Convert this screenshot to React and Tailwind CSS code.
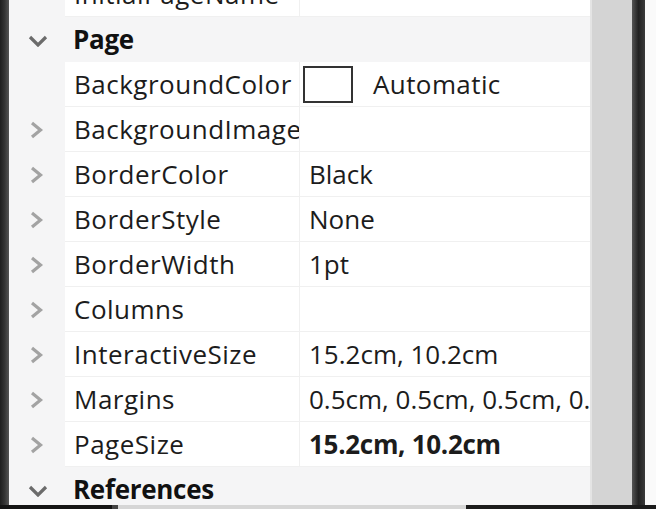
import React from 'react';

const rows = [
  { type: 'prop', name: 'InitialPageName', value: '', top: true },
  { type: 'cat', name: 'Page' },
  { type: 'prop', name: 'BackgroundColor', value: 'Automatic', swatch: true, noArrow: true },
  { type: 'prop', name: 'BackgroundImage', value: '' },
  { type: 'prop', name: 'BorderColor', value: 'Black' },
  { type: 'prop', name: 'BorderStyle', value: 'None' },
  { type: 'prop', name: 'BorderWidth', value: '1pt' },
  { type: 'prop', name: 'Columns', value: '' },
  { type: 'prop', name: 'InteractiveSize', value: '15.2cm, 10.2cm' },
  { type: 'prop', name: 'Margins', value: '0.5cm, 0.5cm, 0.5cm, 0.5cm' },
  { type: 'prop', name: 'PageSize', value: '15.2cm, 10.2cm', bold: true },
  { type: 'cat', name: 'References' },
];

function ChevronRight() {
  return (
    <svg width="15" height="18" viewBox="0 0 15 18" fill="none">
      <polyline points="3,2 11.5,9 3,16" stroke="#a3a3a3" strokeWidth="3.2" strokeLinejoin="miter" />
    </svg>
  );
}

function ChevronDown() {
  return (
    <svg width="20" height="12" viewBox="0 0 20 12" fill="none">
      <polyline points="2,2 10,10 18,2" stroke="#6b6b6b" strokeWidth="3.2" />
    </svg>
  );
}

function Row({ row }) {
  if (row.type === 'cat') {
    return (
      <div className="flex h-[45px] shrink-0 items-center bg-[#f5f5f6]">
        <div className="flex w-[56px] shrink-0 justify-center pl-[2px] pt-[2px]">
          <ChevronDown />
        </div>
        <span className="pl-[8px] text-[26px] font-bold tracking-[-0.3px] text-[#111]">{row.name}</span>
      </div>
    );
  }
  return (
    <div className={`flex h-[45px] shrink-0 ${row.top ? '-mt-[28px]' : ''}`}>
      <div className="flex w-[56px] shrink-0 items-center justify-center bg-[#f5f5f6] pr-[1px]">
        {!row.noArrow && !row.top && <ChevronRight />}
      </div>
      <div className="flex w-[235px] shrink-0 items-center overflow-hidden whitespace-nowrap border-b border-r border-[#f0f0f0] bg-white pl-[9px]">
        <span className="text-[26px] tracking-[0.5px] text-[#1c1c1c]">{row.name}</span>
      </div>
      <div className="flex w-[290px] shrink-0 items-center overflow-hidden whitespace-nowrap border-b border-[#f0f0f0] bg-white">
        {row.swatch ? (
          <>
            <span className="ml-[3px] h-[37px] w-[50px] shrink-0 border-2 border-[#333] bg-white" />
            <span className="ml-[20px] text-[26px] tracking-[0.4px] text-[#1c1c1c]">{row.value}</span>
          </>
        ) : (
          <span className={`pl-[9px] text-[26px] text-[#1c1c1c] ${row.bold ? 'font-bold tracking-[-0.3px]' : ''}`}>
            {row.value}
          </span>
        )}
      </div>
    </div>
  );
}

export default function App() {
  return (
    <div className="h-[509px] w-[656px] overflow-hidden bg-white" style={{ fontFamily: '"Open Sans", "Noto Sans", sans-serif' }}>
      <div className="flex h-[505px] overflow-hidden">
        <div className="w-[9px] shrink-0 bg-gradient-to-r from-[#1e1e1e] via-[#333] to-[#555]" />
        <div className="flex w-[581px] shrink-0 flex-col overflow-hidden bg-[#f5f5f6]">
          {rows.map((r) => (
            <Row key={r.name} row={r} />
          ))}
        </div>
        <div className="w-[42px] shrink-0 border-l-2 border-[#e4e4e4] bg-[#d4d4d4]" />
        <div className="w-[13px] shrink-0 bg-gradient-to-r from-[#555] via-[#222] to-[#3a3a3a]" />
        <div className="flex-1 bg-[#fafafa]" />
      </div>
      <div className="flex h-[4px]">
        <div className="w-[112px] bg-[#141414]" />
        <div className="w-[6px] bg-[#444]" />
        <div className="w-[348px] bg-[#d6d6d6]" />
        <div className="flex-1 bg-[#1c1c1c]" />
      </div>
    </div>
  );
}
